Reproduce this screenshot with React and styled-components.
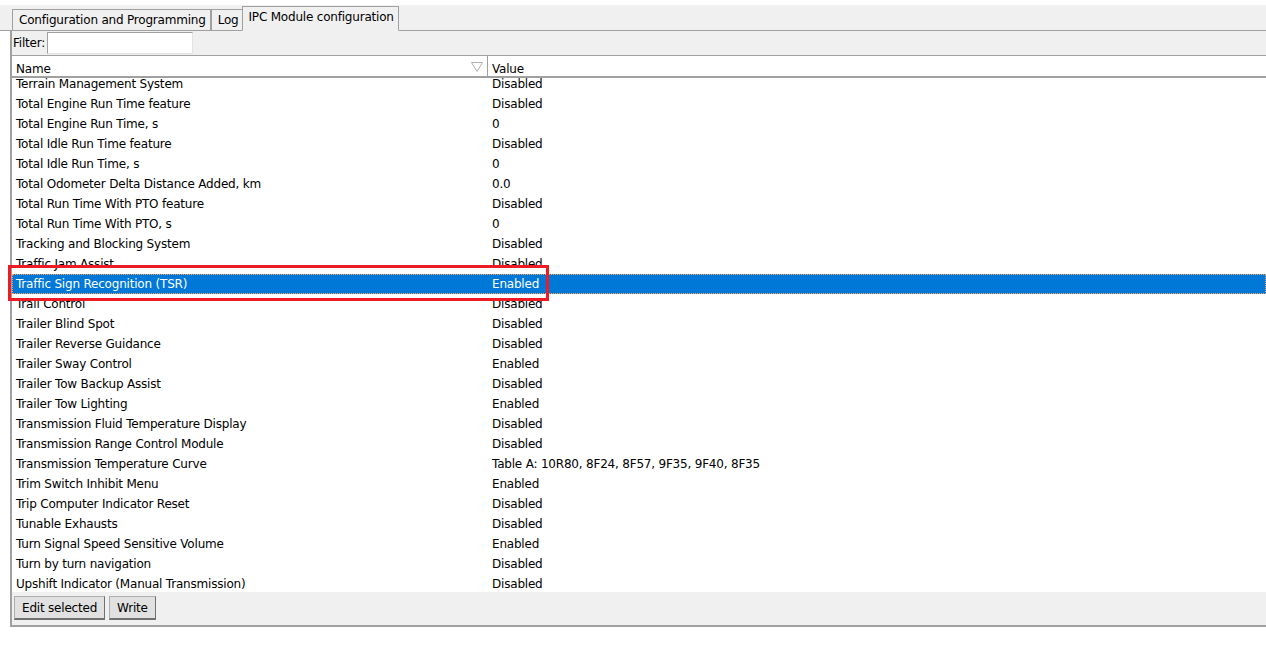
import React from 'react';
import styled, { createGlobalStyle } from 'styled-components';

const Global = createGlobalStyle`
  body { margin: 0; background: #fff; font-family: Tahoma, "DejaVu Sans", sans-serif; font-size: 12px; color: #000; }
`;

const rows = [
  ['Terrain Management System', 'Disabled'],
  ['Total Engine Run Time feature', 'Disabled'],
  ['Total Engine Run Time, s', '0'],
  ['Total Idle Run Time feature', 'Disabled'],
  ['Total Idle Run Time, s', '0'],
  ['Total Odometer Delta Distance Added, km', '0.0'],
  ['Total Run Time With PTO feature', 'Disabled'],
  ['Total Run Time With PTO, s', '0'],
  ['Tracking and Blocking System', 'Disabled'],
  ['Traffic Jam Assist', 'Disabled'],
  ['Traffic Sign Recognition (TSR)', 'Enabled'],
  ['Trail Control', 'Disabled'],
  ['Trailer Blind Spot', 'Disabled'],
  ['Trailer Reverse Guidance', 'Disabled'],
  ['Trailer Sway Control', 'Enabled'],
  ['Trailer Tow Backup Assist', 'Disabled'],
  ['Trailer Tow Lighting', 'Enabled'],
  ['Transmission Fluid Temperature Display', 'Disabled'],
  ['Transmission Range Control Module', 'Disabled'],
  ['Transmission Temperature Curve', 'Table A: 10R80, 8F24, 8F57, 9F35, 9F40, 8F35'],
  ['Trim Switch Inhibit Menu', 'Enabled'],
  ['Trip Computer Indicator Reset', 'Disabled'],
  ['Tunable Exhausts', 'Disabled'],
  ['Turn Signal Speed Sensitive Volume', 'Enabled'],
  ['Turn by turn navigation', 'Disabled'],
  ['Upshift Indicator (Manual Transmission)', 'Disabled'],
];

const Page = styled.div`
  position: relative;
  height: 648px;
  background: #fff;
  font-family: "DejaVu Sans", sans-serif;
  font-size: 12px;
  letter-spacing: -0.2px;
`;

const TabBar = styled.div`
  display: flex;
  align-items: flex-end;
  height: 31px;
  padding-left: 12px;
  background: #f0f0f0;
  border-top: 5px solid #fff;
  box-sizing: border-box;
  border-bottom: 1px solid #a0a0a0;
`;

const Tab = styled.div`
  height: ${p => (p.$active ? 25 : 21)}px;
  padding: 0 4px 0 6px;
  display: flex;
  align-items: center;
  background: #f0f0f0;
  border: 1px solid #a0a0a0;
  border-bottom: ${p => (p.$active ? '1px solid #f0f0f0' : 'none')};
  margin-bottom: ${p => (p.$active ? -1 : 0)}px;
  margin-left: ${p => (p.$active ? -2 : 0)}px;
  padding-bottom: ${p => (p.$active ? 4 : 0)}px;
  box-sizing: border-box;
`;

const Panel = styled.div`
  margin-left: 10px;
  border-left: 2px solid #a0a0a0;
  background: #f0f0f0;
  display: flex;
  flex-direction: column;
  border-bottom: 2px solid #a0a0a0;
`;

const FilterRow = styled.div`
  display: flex;
  align-items: center;
  gap: 2px;
  height: 24px;
  padding-left: 1px;
`;

const FilterInput = styled.div`
  width: 144px;
  height: 20px;
  background: #fff;
  border: 1px solid #a0a0a0;
  border-right-color: #e3e3e3;
  border-bottom-color: #e3e3e3;
`;

const Header = styled.div`
  display: flex;
  height: 23px;
  background: #fff;
  border-top: 1px solid #a0a0a0;
  border-bottom: 2px solid #a0a0a0;
  box-sizing: border-box;
`;

const HeadCell = styled.div`
  width: ${p => p.$w};
  flex: ${p => (p.$grow ? 1 : 'none')};
  display: flex;
  align-items: flex-end;
  justify-content: space-between;
  padding: 0 4px 0 4px;
  border-right: ${p => (p.$grow ? 'none' : '1px solid #a0a0a0')};
  box-sizing: border-box;
`;

const List = styled.div`
  height: 514px;
  overflow: hidden;
  background: #fff;
`;

const Inner = styled.div`
  margin-top: -4px;
`;

const Row = styled.div`
  display: flex;
  height: 20px;
  align-items: center;
  background: ${p => (p.$sel ? '#0078d7' : '#fff')};
  color: ${p => (p.$sel ? '#fff' : '#000')};
  outline: ${p => (p.$sel ? '1px dotted #f7a35c' : 'none')};
  outline-offset: -1px;
`;

const Cell = styled.div`
  width: ${p => p.$w};
  padding-left: 4px;
  white-space: nowrap;
  box-sizing: border-box;
`;

const Buttons = styled.div`
  display: flex;
  gap: 4px;
  height: 33px;
  padding: 4px 0 0 2px;
  box-sizing: border-box;
`;

const Btn = styled.div`
  height: 24px;
  padding: 0 7px;
  display: flex;
  align-items: center;
  background: #e1e1e1;
  border: 1px solid #adadad;
  border-right-color: #707070;
  border-bottom: 2px solid #707070;
  box-sizing: border-box;
`;

const Highlight = styled.div`
  position: absolute;
  left: 8px;
  top: 265px;
  width: 541px;
  height: 36px;
  border: 3px solid #ed1c24;
  box-sizing: border-box;
  pointer-events: none;
`;

export default function App() {
  return (
    <Page>
      <Global />
      <TabBar>
        <Tab>Configuration and Programming</Tab>
        <Tab>Log</Tab>
        <Tab $active>IPC Module configuration</Tab>
      </TabBar>
      <Panel>
        <FilterRow>
          Filter:
          <FilterInput />
        </FilterRow>
        <Header>
          <HeadCell $w="476px">
            Name
            <svg width="12" height="10" viewBox="0 0 12 10" style={{ marginBottom: 4 }}>
              <path d="M0.5 0.5 L11.5 0.5 L6 9.5 Z" fill="none" stroke="#b0b0b0" />
            </svg>
          </HeadCell>
          <HeadCell $grow>Value</HeadCell>
        </Header>
        <List>
          <Inner>
            {rows.map(([n, v]) => (
              <Row key={n} $sel={n.startsWith('Traffic Sign')}>
                <Cell $w="476px">{n}</Cell>
                <Cell>{v}</Cell>
              </Row>
            ))}
          </Inner>
        </List>
        <Buttons>
          <Btn>Edit selected</Btn>
          <Btn>Write</Btn>
        </Buttons>
      </Panel>
      <Highlight />
    </Page>
  );
}
